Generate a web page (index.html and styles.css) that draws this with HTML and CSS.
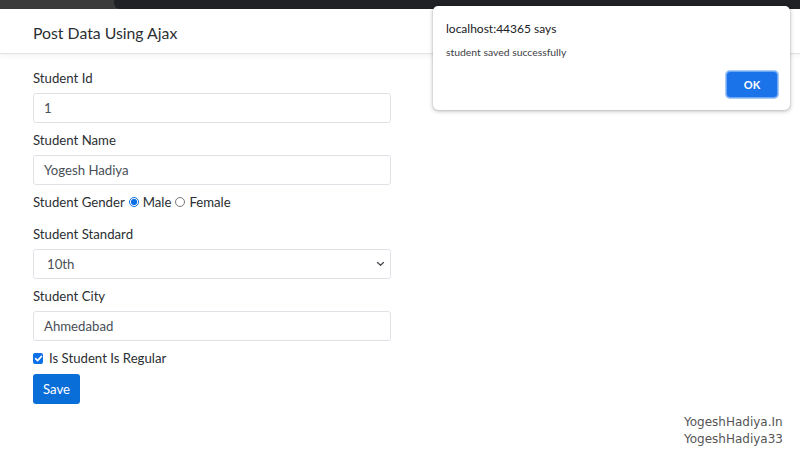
FILE: index.html
```html
<!DOCTYPE html>
<html>
<head>
<meta charset="utf-8">
<link rel="stylesheet" href="styles.css">
</head>
<body>
<div class="chrome">
  <div class="chrome-left"></div>
  <div class="chrome-right"></div>
</div>
<header class="navbar">
  <span class="brand">Post Data Using Ajax</span>
</header>
<main class="container">
  <form class="form">
    <div class="group">
      <label class="lbl">Student Id</label>
      <div class="field">1</div>
    </div>
    <div class="group">
      <label class="lbl">Student Name</label>
      <div class="field">Yogesh Hadiya</div>
    </div>
    <div class="group gender">
      <span>Student Gender</span>
      <span class="radio checked"></span><span>Male</span>
      <span class="radio"></span><span>Female</span>
    </div>
    <div class="group">
      <label class="lbl">Student Standard</label>
      <div class="field select"><span class="sel-text">10th</span>
        <svg class="chev" width="9" height="6" viewBox="0 0 9 6"><path d="M1.5 1.5 L4.5 4.3 L7.5 1.5" fill="none" stroke="#4a4f55" stroke-width="1.3" stroke-linecap="round" stroke-linejoin="round"/></svg>
      </div>
    </div>
    <div class="group">
      <label class="lbl">Student City</label>
      <div class="field">Ahmedabad</div>
    </div>
    <div class="check-row">
      <span class="checkbox"><svg width="9" height="9" viewBox="0 0 10 10"><path d="M1.8 5.2 L4 7.4 L8.3 2.6" fill="none" stroke="#fff" stroke-width="1.8" stroke-linecap="round" stroke-linejoin="round"/></svg></span>
      <span>Is Student Is Regular</span>
    </div>
    <div class="btn-row"><button type="button" class="btn">Save</button></div>
  </form>
</main>

<div class="dialog">
  <div class="dlg-title">localhost:44365 says</div>
  <div class="dlg-msg">student saved successfully</div>
  <div class="dlg-actions"><button type="button" class="ok">OK</button></div>
</div>

<div class="watermark">
  <div>YogeshHadiya.In</div>
  <div>YogeshHadiya33</div>
</div>
</body>
</html>
```

FILE: styles.css
```css
* { box-sizing: border-box; }
html, body { margin: 0; padding: 0; }
body {
  width: 800px;
  height: 449px;
  overflow: hidden;
  background: #fff;
  font-family: Lato, "Noto Sans", sans-serif;
  color: #2b2f33;
  position: relative;
}
.chrome { display: flex; height: 9px; background: #3c3c3c; }
.chrome-left { width: 114px; background: #3a3a3a; }
.chrome-right { flex: 1; background: #202124; border-bottom-left-radius: 6px; }
.navbar {
  height: 45px;
  display: flex;
  align-items: center;
  padding-left: 33px;
  padding-top: 2px;
  border-bottom: 1px solid #e3e3e3;
  box-shadow: 0 2px 6px rgba(0,0,0,0.05);
}
.brand { font-size: 15.8px; color: #2b2f33; }
.container { padding: 14px 0 0 33px; }
.form { width: 358px; display: flex; flex-direction: column; }
.group { display: flex; flex-direction: column; margin-bottom: 7px; }
.lbl { font-size: 13.2px; line-height: 20px; height: 20px; margin-bottom: 5px; }
.field {
  height: 30px;
  border: 1px solid #dee2e6;
  border-radius: 3px;
  font-size: 13.2px;
  color: #495057;
  display: flex;
  align-items: center;
  padding-left: 10px;
}
.select { padding-left: 13px; justify-content: space-between; padding-right: 5px; }
.gender {
  flex-direction: row;
  align-items: center;
  height: 20px;
  font-size: 13.2px;
  margin-bottom: 12px;
}
.radio {
  width: 10px; height: 10px;
  border-radius: 50%;
  border: 1px solid #777;
  margin: 0 4px 0 4px;
}
.radio.checked { border: 1px solid #0b6fe8; background: radial-gradient(circle, #0b6fe8 0 2.8px, #fff 3.3px); }
.check-row {
  display: flex; align-items: center; height: 20px; font-size: 13.2px;
  margin-bottom: 6px;
}
.checkbox {
  width: 10px; height: 11px; border-radius: 2px; background: #0b6fe8;
  display: flex; align-items: center; justify-content: center;
  margin-right: 6px;
}
.btn-row { display: flex; }
.btn {
  width: 47px; height: 30px;
  background: #0a6ed8;
  border: none;
  border-radius: 3px;
  color: #fff;
  font-family: Lato, "Noto Sans", sans-serif;
  font-size: 13.2px;
  padding: 0;
}
.dialog {
  position: absolute;
  left: 433px; top: 6px;
  width: 357px; height: 104px;
  background: #fff;
  border-radius: 5px;
  box-shadow: 0 1px 4px rgba(0,0,0,0.3), 0 0 1px rgba(0,0,0,0.3);
  padding: 14px 12px 0 13px;
  display: flex; flex-direction: column;
}
.dlg-title { font-size: 12px; color: #202124; line-height: 18px; }
.dlg-msg { font-size: 10.4px; color: #3c4043; margin-top: 7px; line-height: 14px; }
.dlg-actions { display: flex; justify-content: flex-end; margin-top: 12px; }
.ok {
  width: 52px; height: 27px;
  background: #1a73e8;
  border: 1px solid #6ea7f2;
  box-shadow: 0 0 0 1px #a9c9f7;
  border-radius: 4px;
  color: #fff;
  font-family: Lato, "Noto Sans", sans-serif;
  font-weight: bold;
  font-size: 11px;
  padding: 0;
}
.watermark {
  position: absolute;
  left: 684px; top: 414px;
  font-family: "DejaVu Sans", sans-serif;
  font-size: 12px;
  line-height: 17px;
  color: #555;
}
```
